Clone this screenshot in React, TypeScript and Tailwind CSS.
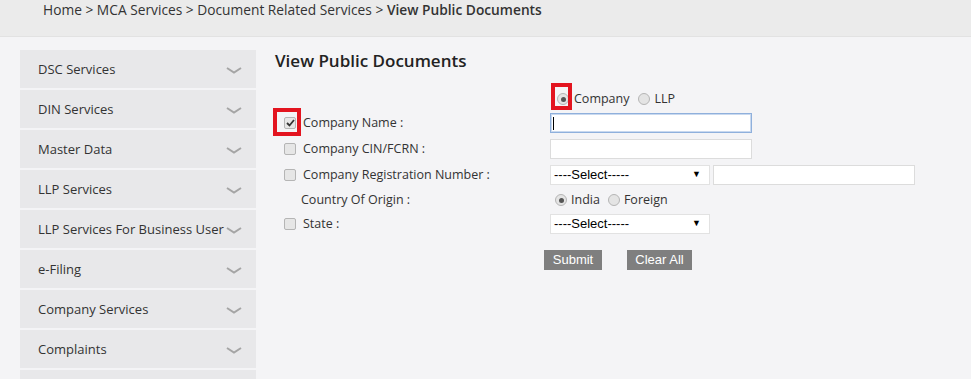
const menu = [
  "DSC Services",
  "DIN Services",
  "Master Data",
  "LLP Services",
  "LLP Services For Business User",
  "e-Filing",
  "Company Services",
  "Complaints",
  "",
];

function Chevron() {
  return (
    <svg width="16" height="7" viewBox="0 0 16 7" className="shrink-0">
      <polyline points="1,1 8,5.5 15,1" fill="none" stroke="#a5a5a5" strokeWidth="2" />
    </svg>
  );
}

function Checkbox({ checked = false }: { checked?: boolean }) {
  return (
    <span className="w-[12px] h-[12px] border border-[#b5b5b5] bg-[#e6e6e6] rounded-[2px] flex items-center justify-center">
      {checked && (
        <svg width="9" height="8" viewBox="0 0 9 8">
          <polyline points="1,4 3.5,6.5 8,1" fill="none" stroke="#333" strokeWidth="1.8" />
        </svg>
      )}
    </span>
  );
}

function Radio({ checked = false }: { checked?: boolean }) {
  return (
    <span className="w-[12px] h-[12px] rounded-full border border-[#b5b5b5] bg-[#e4e4e4] flex items-center justify-center">
      {checked && <span className="w-[5px] h-[5px] rounded-full bg-[#555]" />}
    </span>
  );
}

function Select() {
  return (
    <div className="w-[160px] h-[20px] bg-white border border-[#e2e2e2] flex items-center justify-between pl-[3px] pr-[8px] text-[13px] text-black font-['Liberation_Sans',sans-serif]">
      <span>----Select-----</span>
      <span className="text-[9px]">▼</span>
    </div>
  );
}

export default function App() {
  return (
    <div className="w-full h-[379px] overflow-hidden bg-[#f4f4f6] text-[#333] font-['Open_Sans',sans-serif]">
      <div className="h-[37px] bg-[#ebebeb] border-b border-[#e2e2e2] pl-[43px] pt-[1px] text-[13.75px] leading-[18px] text-[#333]">
        Home &gt; MCA Services &gt; Document Related Services &gt; <b className="font-semibold">View Public Documents</b>
      </div>

      <div className="flex pt-[13px]">
        <div className="ml-[20px] w-[236px] flex flex-col gap-[2px]">
          {menu.map((m, i) => (
            <div key={i} className="h-[38px] bg-[#e8e8ea] flex items-center justify-between pl-[18px] pr-[14px] pt-[2px] text-[13px] whitespace-nowrap">
              <span>{m}</span>
              {m && <Chevron />}
            </div>
          ))}
        </div>

        <div className="ml-[19px] flex-1">
          <h1 className="h-[21px] leading-[21px] text-[17px] font-semibold text-[#222]">View Public Documents</h1>

          <div className="mt-[17px] text-[12.5px]">
            <div className="h-[22px] flex items-center pl-[275px]">
              <span className="relative flex items-center ml-[7px]">
                <span className="absolute -left-[6px] -top-[10px] w-[21px] h-[27px] border-[4px] border-[#e3141f]" />
                <Radio checked />
              </span>
              <span className="ml-[5px]">Company</span>
              <span className="ml-[8px]"><Radio /></span>
              <span className="ml-[5px]">LLP</span>
            </div>

            <div className="h-[26px] flex items-center">
              <div className="w-[275px] flex items-center">
                <span className="relative ml-[9px]">
                  <span className="absolute -left-[11px] -top-[9px] w-[28px] h-[28px] border-[4px] border-[#e3141f]" />
                  <Checkbox checked />
                </span>
                <span className="ml-[7px]">Company Name :</span>
              </div>
              <div className="w-[202px] h-[20px] bg-white border border-[#8fb0dc] shadow-[inset_0_0_0_1px_#c9d9ef] flex items-center pl-[2px]">
                <span className="w-[1px] h-[13px] bg-black" />
              </div>
            </div>

            <div className="h-[26px] flex items-center">
              <div className="w-[275px] flex items-center">
                <span className="ml-[9px]"><Checkbox /></span>
                <span className="ml-[7px]">Company CIN/FCRN :</span>
              </div>
              <div className="w-[202px] h-[20px] bg-white border border-[#dcdcdc]" />
            </div>

            <div className="h-[26px] flex items-center">
              <div className="w-[275px] flex items-center">
                <span className="ml-[9px]"><Checkbox /></span>
                <span className="ml-[7px]">Company Registration Number :</span>
              </div>
              <Select />
              <div className="ml-[3px] w-[202px] h-[20px] bg-white border border-[#dcdcdc]" />
            </div>

            <div className="h-[24px] flex items-center">
              <div className="w-[275px] pl-[26px]">Country Of Origin :</div>
              <span className="ml-[5px]"><Radio checked /></span>
              <span className="ml-[4px]">India</span>
              <span className="ml-[8px]"><Radio /></span>
              <span className="ml-[4px]">Foreign</span>
            </div>

            <div className="h-[24px] flex items-center">
              <div className="w-[275px] flex items-center">
                <span className="ml-[9px]"><Checkbox /></span>
                <span className="ml-[7px]">State :</span>
              </div>
              <Select />
            </div>

            <div className="mt-[14px] ml-[269px] flex gap-[25px] font-['Liberation_Sans',sans-serif] text-[13px] text-white">
              <button className="h-[20px] w-[58px] bg-[#7f7f7f]">Submit</button>
              <button className="h-[20px] w-[65px] bg-[#7f7f7f]">Clear All</button>
            </div>
          </div>
        </div>
      </div>
    </div>
  );
}
